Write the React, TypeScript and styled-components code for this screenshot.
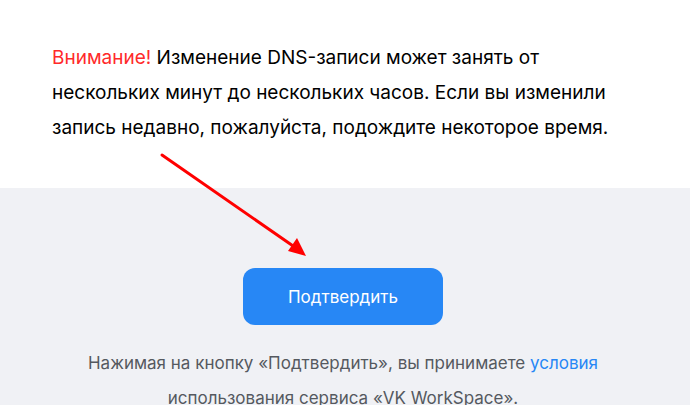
import React from 'react';
import styled, { createGlobalStyle } from 'styled-components';

const GlobalStyle = createGlobalStyle`
  html, body {
    margin: 0;
    padding: 0;
    background: #f0f1f5;
  }
  body {
    font-family: Inter, "Noto Sans", "Liberation Sans", sans-serif;
    -webkit-font-smoothing: antialiased;
  }
`;

const Page = styled.div`
  position: relative;
  width: 690px;
  height: 405px;
  overflow: hidden;
  display: flex;
  flex-direction: column;
`;

const NoticeSection = styled.section`
  background: #ffffff;
  padding: 40px 52px 43px;
`;

const Notice = styled.p`
  margin: 0;
  font-size: 19px;
  line-height: 35px;
  color: #000000;
`;

const Warning = styled.span`
  color: #ff2a2a;
`;

const ActionSection = styled.section`
  flex: 1;
  background: #f0f1f5;
  display: flex;
  flex-direction: column;
  align-items: center;
  padding: 80px 4px 0 0;
`;

const ConfirmButton = styled.button`
  width: 200px;
  height: 57px;
  border: none;
  border-radius: 12px;
  background: #2787f5;
  color: #ffffff;
  font-family: inherit;
  font-size: 17px;
  cursor: pointer;
`;

const Terms = styled.p`
  margin: 21px 0 0;
  font-size: 17px;
  line-height: 35px;
  color: #55595f;
  text-align: center;
  white-space: nowrap;
`;

const TermsLink = styled.a`
  color: #2787f5;
  text-decoration: none;
`;

const Annotation = styled.svg`
  position: absolute;
  left: 0;
  top: 0;
  pointer-events: none;
`;

export default function App() {
  return (
    <>
      <GlobalStyle />
      <Page>
        <NoticeSection>
          <Notice>
            <Warning>Внимание!</Warning> Изменение DNS-записи может занять от
            <br />
            нескольких минут до нескольких часов. Если вы изменили
            <br />
            запись недавно, пожалуйста, подождите некоторое время.
          </Notice>
        </NoticeSection>
        <ActionSection>
          <ConfirmButton>Подтвердить</ConfirmButton>
          <Terms>
            Нажимая на кнопку «Подтвердить», вы принимаете <TermsLink href="#">условия</TermsLink>
            <br />
            использования сервиса «VK WorkSpace».
          </Terms>
        </ActionSection>
        <Annotation width="690" height="405" viewBox="0 0 690 405">
          <line x1="162" y1="155" x2="296" y2="248" stroke="#ff0000" strokeWidth="3" strokeLinecap="round" />
          <polygon points="306,256 288,251 297,238" fill="#ff0000" />
        </Annotation>
      </Page>
    </>
  );
}
